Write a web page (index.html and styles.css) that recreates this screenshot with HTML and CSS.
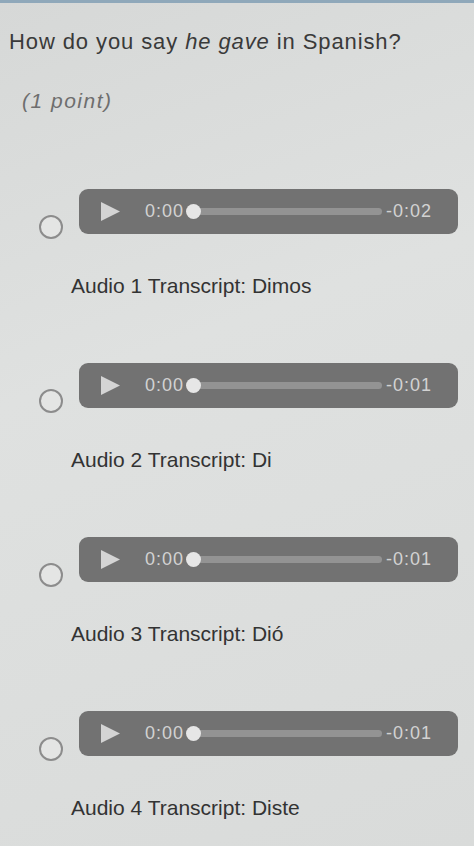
FILE: index.html
```html
<!DOCTYPE html>
<html lang="en">
<head>
    <meta charset="UTF-8">
    <meta name="viewport" content="width=device-width, initial-scale=1.0">
    <title>Question</title>
    <link rel="stylesheet" href="styles.css">
</head>
<body>
    <div class="topbar"></div>
    <div class="question">
        <h1>How do you say <em>he gave</em> in Spanish?</h1>
        <p class="points">(1 point)</p>

        <div class="option">
            <div class="row">
                <span class="radio"></span>
                <div class="player">
                    <svg class="play" width="19" height="19" viewBox="0 0 19 19"><path d="M0 0 L19 9.5 L0 19 Z" fill="#d4d4d4"/></svg>
                    <span class="time">0:00</span>
                    <div class="track"><span class="knob"></span></div>
                    <span class="time">-0:02</span>
                </div>
            </div>
            <p class="transcript">Audio 1 Transcript: Dimos</p>
        </div>

        <div class="option">
            <div class="row">
                <span class="radio"></span>
                <div class="player">
                    <svg class="play" width="19" height="19" viewBox="0 0 19 19"><path d="M0 0 L19 9.5 L0 19 Z" fill="#d4d4d4"/></svg>
                    <span class="time">0:00</span>
                    <div class="track"><span class="knob"></span></div>
                    <span class="time">-0:01</span>
                </div>
            </div>
            <p class="transcript">Audio 2 Transcript: Di</p>
        </div>

        <div class="option">
            <div class="row">
                <span class="radio"></span>
                <div class="player">
                    <svg class="play" width="19" height="19" viewBox="0 0 19 19"><path d="M0 0 L19 9.5 L0 19 Z" fill="#d4d4d4"/></svg>
                    <span class="time">0:00</span>
                    <div class="track"><span class="knob"></span></div>
                    <span class="time">-0:01</span>
                </div>
            </div>
            <p class="transcript">Audio 3 Transcript: Dió</p>
        </div>

        <div class="option">
            <div class="row">
                <span class="radio"></span>
                <div class="player">
                    <svg class="play" width="19" height="19" viewBox="0 0 19 19"><path d="M0 0 L19 9.5 L0 19 Z" fill="#d4d4d4"/></svg>
                    <span class="time">0:00</span>
                    <div class="track"><span class="knob"></span></div>
                    <span class="time">-0:01</span>
                </div>
            </div>
            <p class="transcript">Audio 4 Transcript: Diste</p>
        </div>
    </div>
</body>
</html>
```

FILE: styles.css
```css
body {
    margin: 0;
    font-family: "Liberation Sans", Arial, sans-serif;
    background: linear-gradient(160deg, #d6d8d7, #dfe1e0 40%, #d9dbda);
    min-height: 846px;
    color: #333;
}
.topbar {
    height: 3px;
    background: #8fa8ba;
}
.question {
    padding-top: 26px;
}
h1 {
    margin: 0;
    padding-left: 9px;
    font-size: 22px;
    line-height: 26px;
    font-weight: normal;
    letter-spacing: 0.9px;
    color: #3a3a3a;
}
h1 em {
    font-style: italic;
}
.points {
    margin: 33px 0 0;
    padding-left: 22px;
    font-size: 21px;
    line-height: 26px;
    font-style: italic;
    letter-spacing: 1.5px;
    color: #6e6e6e;
}
.option {
    margin-top: 64px;
}
.option:first-of-type {
    margin-top: 75px;
}
.row {
    display: flex;
    align-items: flex-start;
}
.radio {
    width: 20px;
    height: 20px;
    margin: 26px 0 0 39px;
    border: 2px solid #8c8c8c;
    border-radius: 50%;
    background: #e4e5e4;
    flex-shrink: 0;
}
.player {
    display: flex;
    align-items: center;
    margin-left: 16px;
    width: 379px;
    height: 45px;
    box-sizing: border-box;
    padding: 0 26px 0 22px;
    background: #727272;
    border-radius: 9px;
}
.play {
    flex-shrink: 0;
    margin-right: 25px;
}
.time {
    font-size: 18px;
    letter-spacing: 1px;
    color: #d2d2d2;
}
.track {
    position: relative;
    flex: 1;
    height: 15px;
    margin: 0 4px 0 2px;
}
.track::before {
    content: "";
    position: absolute;
    left: 7px;
    right: 0;
    top: 4px;
    height: 7px;
    border-radius: 4px;
    background: #939393;
}
.knob {
    position: absolute;
    left: 0;
    top: 0;
    width: 15px;
    height: 15px;
    border-radius: 50%;
    background: #e6e6e6;
}
.transcript {
    margin: 34px 0 0;
    padding-left: 71px;
    font-size: 21px;
    line-height: 26px;
    color: #333;
}
```
